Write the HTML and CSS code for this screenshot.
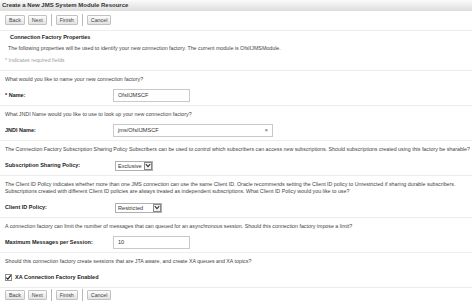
FILE: index.html
```html
<!DOCTYPE html>
<html lang="en">
<head>
    <meta charset="UTF-8">
    <title>Create a New JMS System Module Resource</title>
    <link rel="stylesheet" href="styles.css">
</head>
<body>
    <div class="titlebar">Create a New JMS System Module Resource</div>

    <div class="toolbar">
        <span class="btn">Back</span>
        <span class="btn">Next</span>
        <span class="sep"></span>
        <span class="btn">Finish</span>
        <span class="sep"></span>
        <span class="btn">Cancel</span>
    </div>

    <div class="intro">
        <h2>Connection Factory Properties</h2>
        <p class="desc">The following properties will be used to identify your new connection factory. The current module is OfsIIJMSModule.</p>
        <p class="req">* Indicates required fields</p>
    </div>

    <div class="section">
        <p class="q">What would you like to name your new connection factory?</p>
        <div class="field">
            <label>* Name:</label>
            <span class="input short">OfsIIJMSCF</span>
        </div>
    </div>

    <div class="section">
        <p class="q">What JNDI Name would you like to use to look up your new connection factory?</p>
        <div class="field">
            <label>JNDI Name:</label>
            <span class="input long">jms/OfsIIJMSCF<span class="clear">&#215;</span></span>
        </div>
    </div>

    <div class="section">
        <p class="q">The Connection Factory Subscription Sharing Policy Subscribers can be used to control which subscribers can access new subscriptions. Should subscriptions created using this factory be sharable?</p>
        <div class="field">
            <label>Subscription Sharing Policy:</label>
            <span class="select"><span class="val">Exclusive</span><span class="arrow"><svg width="6" height="5" viewBox="0 0 6 5"><path d="M0.8 1.2 L3 3.6 L5.2 1.2" fill="none" stroke="#333" stroke-width="1.1"/></svg></span></span>
        </div>
    </div>

    <div class="section">
        <p class="q">The Client ID Policy indicates whether more than one JMS connection can use the same Client ID. Oracle recommends setting the Client ID policy to Unrestricted if sharing durable subscribers.<br>Subscriptions created with different Client ID policies are always treated as independent subscriptions. What Client ID Policy would you like to use?</p>
        <div class="field">
            <label>Client ID Policy:</label>
            <span class="select"><span class="val wide">Restricted</span><span class="arrow"><svg width="6" height="5" viewBox="0 0 6 5"><path d="M0.8 1.2 L3 3.6 L5.2 1.2" fill="none" stroke="#333" stroke-width="1.1"/></svg></span></span>
        </div>
    </div>

    <div class="section">
        <p class="q">A connection factory can limit the number of messages that can queued for an asynchronous session. Should this connection factory impose a limit?</p>
        <div class="field">
            <label>Maximum Messages per Session:</label>
            <span class="input short">10</span>
        </div>
    </div>

    <div class="section">
        <p class="q">Should this connection factory create sessions that are JTA aware, and create XA queues and XA topics?</p>
        <div class="check">
            <span class="box"><svg width="7" height="7" viewBox="0 0 7 7"><path d="M1.2 3.6 L2.8 5.2 L5.8 1.4" fill="none" stroke="#222" stroke-width="1.2"/></svg></span>
            <label>XA Connection Factory Enabled</label>
        </div>
    </div>

    <div class="toolbar bottom">
        <span class="btn">Back</span>
        <span class="btn">Next</span>
        <span class="sep"></span>
        <span class="btn">Finish</span>
        <span class="sep"></span>
        <span class="btn">Cancel</span>
    </div>
</body>
</html>
```

FILE: styles.css
```css
* {
    box-sizing: border-box;
}
body {
    margin: 0;
    width: 474px;
    height: 305px;
    overflow: hidden;
    background: #fff;
    font-family: "Liberation Sans", Arial, sans-serif;
    font-size: 5.3px;
    line-height: 7px;
    color: #444;
}
p, h2 {
    margin: 0;
}
.titlebar {
    height: 11px;
    margin-right: 2px;
    padding-left: 2px;
    background: linear-gradient(#fbfbfb, #dcdcdc);
    font-size: 6px;
    font-weight: bold;
    line-height: 11px;
    color: #333;
}
.toolbar {
    display: flex;
    align-items: center;
    gap: 3px;
    margin-right: 2px;
    padding: 3px 5px 4px;
    border-bottom: 1px solid #ededed;
}
.toolbar.bottom {
    padding-top: 1px;
    border-bottom: none;
}
.btn {
    height: 10px;
    padding: 0 3px;
    border: 1px solid #c2c2c2;
    border-radius: 1px;
    background: linear-gradient(#fdfdfd, #e2e2e2);
    line-height: 8px;
    color: #444;
}
.sep {
    width: 1px;
    height: 12px;
    margin: 0 1px;
    background: #b8b8b8;
}
.intro {
    margin-right: 2px;
    padding: 3px 0 6px;
    border-bottom: 1px solid #ededed;
}
.intro h2 {
    padding-left: 10px;
    font-size: 5.5px;
    color: #222;
}
.intro .desc {
    margin-top: 4px;
    padding-left: 8px;
}
.intro .req {
    margin-top: 5px;
    padding-left: 5px;
    color: #a0a0a0;
}
.section {
    margin-right: 2px;
    padding: 5px 0 3px 5px;
    border-bottom: 1px solid #ededed;
}
.field {
    display: flex;
    align-items: center;
    height: 13px;
    margin-top: 6px;
}
.field label {
    width: 108px;
    font-size: 5.5px;
    font-weight: bold;
    color: #222;
}
.input {
    position: relative;
    height: 13px;
    padding: 0 4px;
    border: 1px solid #c9c9c9;
    background: #fff;
    font-size: 5.6px;
    line-height: 11px;
    color: #333;
}
.input.short {
    width: 77px;
}
.input.long {
    width: 160px;
}
.clear {
    position: absolute;
    right: 4px;
    top: 0;
    font-size: 6px;
    color: #555;
}
.select {
    display: flex;
    height: 10px;
    margin-left: 2px;
    border: 1px solid #b0b0b0;
    background: #fff;
}
.select .val {
    padding: 0 2px;
    font-size: 5.6px;
    line-height: 8px;
    color: #333;
}
.select .val.wide {
    padding-right: 10px;
}
.select .arrow {
    display: flex;
    align-items: center;
    justify-content: center;
    width: 8px;
    border: 1px solid #8a8a8a;
    background: #f4f4f4;
}
.check {
    display: flex;
    align-items: center;
    gap: 3px;
    height: 13px;
    margin-top: 6px;
}
.check .box {
    display: flex;
    width: 7px;
    height: 7px;
    border: 1px solid #8c8c8c;
    background: #fff;
}
.check .box svg {
    margin: -1px;
}
.check label {
    font-size: 5.5px;
    font-weight: bold;
    color: #222;
}
```
